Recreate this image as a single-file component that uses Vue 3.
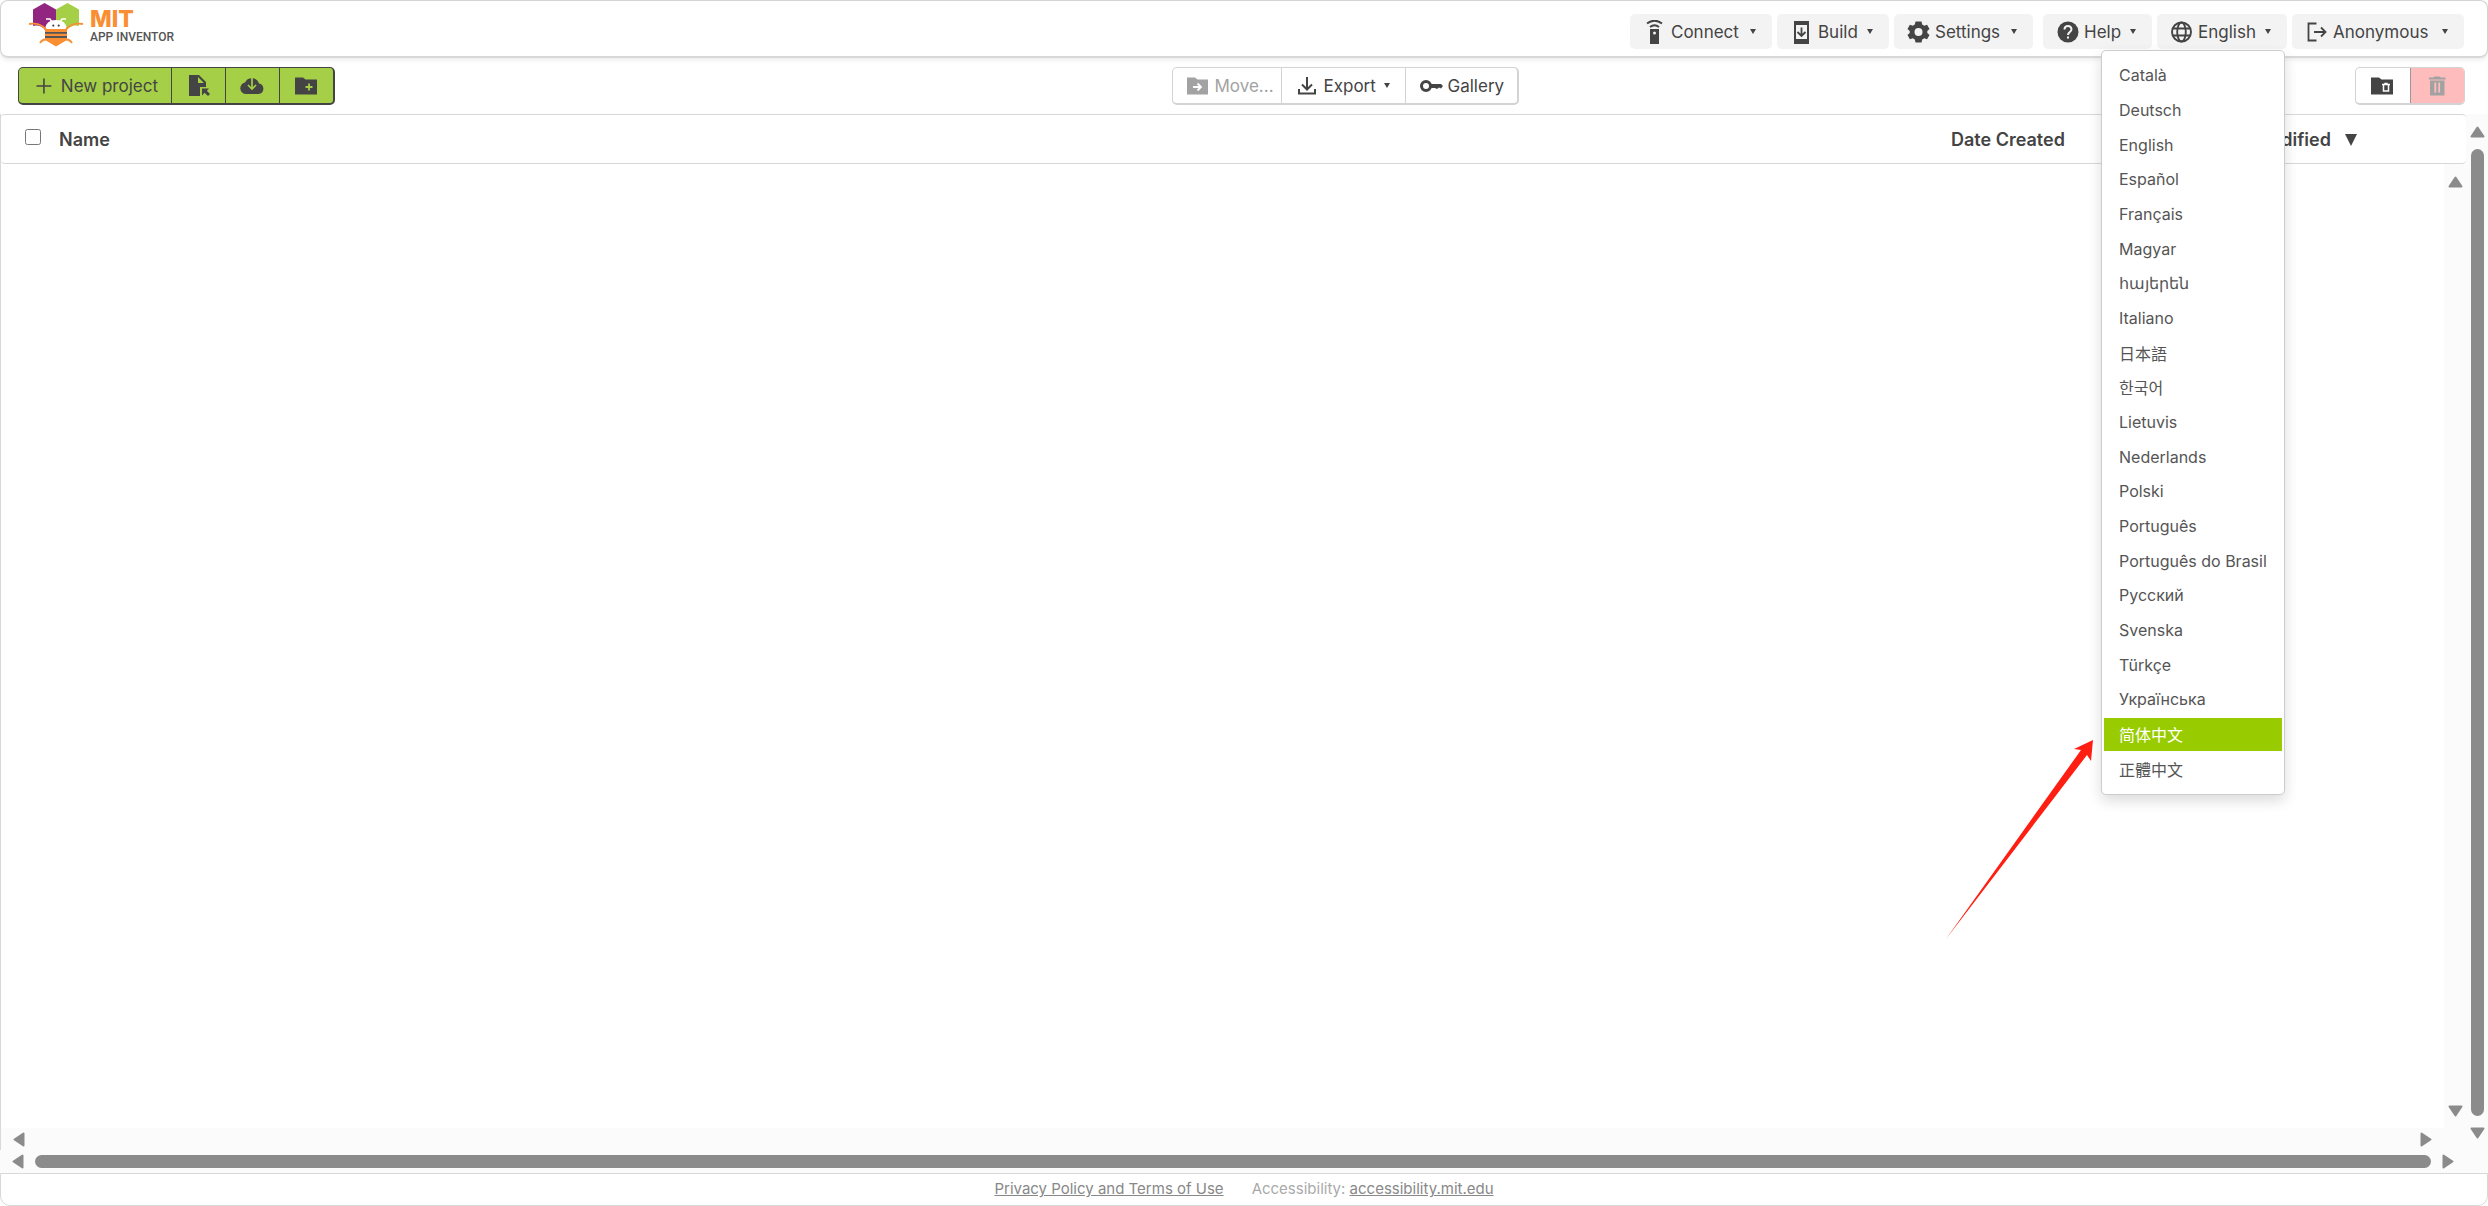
<script setup>
import { ref } from 'vue'

const languages = [
	'Català',
	'Deutsch',
	'English',
	'Español',
	'Français',
	'Magyar',
	'հայերեն',
	'Italiano',
	'日本語',
	'한국어',
	'Lietuvis',
	'Nederlands',
	'Polski',
	'Português',
	'Português do Brasil',
	'Русский',
	'Svenska',
	'Türkçe',
	'Українська',
	'简体中文',
	'正體中文',
]

const highlighted = ref('简体中文')
const selectAll = ref(false)
</script>

<template>
	<div class="page">
		<header class="topbar">
			<a class="logo" href="#" aria-label="MIT App Inventor">
				<svg class="bee" viewBox="0 0 56 46" width="56" height="46">
					<path fill="#91257f" d="M4 7.5 15.5 1 27 7.5V28H4z" />
					<path fill="#a5cf47" d="M27 7.5 38.5 1 50 7.5V28H27z" />
					<path fill="#fff" d="M3 24Q12 22 16 28L17 38H37L38 28Q42 22 51 24V32H3z" />
					<path fill="#fff" d="M16 27Q17 18 27 18T38 27z" />
					<path fill="none" stroke="#fff" stroke-width="1.4" d="M17 17H21L23 20M37 17H33L31 20" />
					<circle cx="24.3" cy="23.6" r="1.1" fill="#444" />
					<circle cx="29.7" cy="23.6" r="1.1" fill="#444" />
					<path fill="none" stroke="#f98e32" stroke-width="1.8" d="M0 22Q10 20 17 27M54 22Q44 20 37 27M11 41Q13 37 20 37M43 41Q41 37 34 37" />
					<path fill="#f98e32" d="M16 27H38V38L27 44.5 16 38z" />
					<path fill="#555" d="M16 30H38V31.8H16zM16 34H38V36H16z" />
				</svg>
				<span class="logo-text">
					<span class="logo-mit">MIT</span>
					<span class="logo-name">APP INVENTOR</span>
				</span>
			</a>
			<nav class="menus">
				<button class="menu-btn connect">
					<svg class="icon" viewBox="0 0 24 24">
						<path fill="none" stroke="currentColor" stroke-width="2" d="M5 3.5Q12.5-2 20 3.5M8 7Q12.5 3.5 17 7" />
						<path fill="currentColor" fill-rule="evenodd" d="M8 9H17V24H8zM12.5 11.5A1.5 1.5 0 1 0 12.5 14.5 1.5 1.5 0 1 0 12.5 11.5z" />
					</svg>
					Connect<i class="caret"></i>
				</button>
				<button class="menu-btn build">
					<svg class="icon" viewBox="0 0 24 24">
						<path fill="currentColor" fill-rule="evenodd" d="M5 1H20V24H5zM7 5V19H18V5z" />
						<path fill="none" stroke="currentColor" stroke-width="1.8" d="M12.5 7.5V16M8.5 12 12.5 16 16.5 12" />
					</svg>
					Build<i class="caret"></i>
				</button>
				<button class="menu-btn settings">
					<svg class="icon" viewBox="0 0 24 24">
						<path fill="currentColor" fill-rule="evenodd" d="M9.5 1.5H15.5L16.2 4.5 18.2 5.7 21.1 4.8 23.5 9 21.3 11V13L23.5 15 21.1 19.2 18.2 18.3 16.2 19.5 15.5 22.5H9.5L8.8 19.5 6.8 18.3 3.9 19.2 1.5 15 3.7 13V11L1.5 9 3.9 4.8 6.8 5.7 8.8 4.5zM12.5 8A4 4 0 1 0 12.5 16 4 4 0 1 0 12.5 8z" />
					</svg>
					Settings<i class="caret"></i>
				</button>
				<button class="menu-btn help">
					<svg class="icon" viewBox="0 0 24 24">
						<circle cx="13" cy="12" r="10.5" fill="currentColor" />
						<path fill="none" stroke="#f3f3f3" stroke-width="2" d="M9.5 9.5C9.5 5 16.5 5 16.5 9.3 16.5 12 13 12 13 15" />
						<path fill="#f3f3f3" d="M12 16.5H14V18.5H12z" />
					</svg>
					Help<i class="caret"></i>
				</button>
				<div class="language">
					<button class="menu-btn lang" aria-expanded="true">
						<svg class="icon" viewBox="0 0 24 24">
							<g fill="none" stroke="currentColor" stroke-width="1.9">
								<circle cx="12.5" cy="12" r="9.5" />
								<ellipse cx="12.5" cy="12" rx="4.3" ry="9.5" />
								<path d="M4 8.5H21M4 15.5H21" />
							</g>
						</svg>
						English<i class="caret"></i>
					</button>
					<ul class="dropdown">
						<li v-for="name in languages" :key="name">
							<button class="lang-item" :class="{ active: name === highlighted }">{{ name }}</button>
							<svg v-if="name === highlighted" class="pointer" viewBox="0 0 147 199">
								<path fill="#ff1f12" d="M147 0 128 9 135 10 0 199 141 15 145 21z" />
							</svg>
						</li>
					</ul>
				</div>
				<button class="menu-btn account">
					<svg class="icon" viewBox="0 0 24 24">
						<path fill="none" stroke="currentColor" stroke-width="1.8" d="M12.5 3.5H4.5V20.5H12.5M10 12H21M17 7.5 21.5 12 17 16.5" />
					</svg>
					Anonymous<i class="caret"></i>
				</button>
			</nav>
		</header>

		<div class="toolbar">
			<div class="group green">
				<button class="tool new">
					<svg viewBox="0 0 16 16" width="16" height="16">
						<path fill="none" stroke="currentColor" stroke-width="1.6" d="M8 .5V15.5M.5 8H15.5" />
					</svg>
					New project
				</button>
				<button class="tool square" aria-label="Import project">
					<svg class="icon" viewBox="0 0 24 24">
						<path fill="currentColor" fill-rule="evenodd" d="M3 1H13L20 8V13H14V22H3zM12 3V9H18z" />
						<path fill="currentColor" d="M16 14.5H23L20.8 16.7 24 20 22 22 18.5 18.7 16 21.5z" />
					</svg>
				</button>
				<button class="tool square" aria-label="Import from cloud">
					<svg class="icon" viewBox="0 0 24 24">
						<path fill="currentColor" d="M6 20A5.8 5.8 0 0 1 5 8.5 7.5 7.5 0 0 1 19 9.5 5.3 5.3 0 0 1 18.5 20z" />
						<path fill="none" stroke="#a5cf47" stroke-width="1.7" d="M12 2V15M8 11 12 15 16 11" />
					</svg>
				</button>
				<button class="tool square" aria-label="New folder">
					<svg class="icon" viewBox="0 0 24 24">
						<path fill="currentColor" d="M1 3.5H9L11.5 5.5H23V20.5H1z" />
						<path fill="none" stroke="#a5cf47" stroke-width="1.8" d="M15 9.5V16.5M11.5 13H18.5" />
					</svg>
				</button>
			</div>
			<div class="group white">
				<button class="tool move" disabled>
					<svg class="icon" viewBox="0 0 24 24">
						<path fill="currentColor" d="M1 3.5H9L11.5 5.5H22V20.5H1z" />
						<path fill="none" stroke="#fff" stroke-width="1.8" d="M7 13H15M11.5 9.5 15 13 11.5 16.5" />
					</svg>
					Move...
				</button>
				<button class="tool export">
					<svg class="icon" viewBox="0 0 24 24">
						<path fill="none" stroke="currentColor" stroke-width="2" d="M12 3V15.5M7 10.5 12 15.5 17 10.5M4 15V19.5H20V15" />
					</svg>
					Export<i class="caret"></i>
				</button>
				<button class="tool gallery">
					<svg class="icon" viewBox="0 0 24 24">
						<circle cx="7" cy="12" r="4.5" fill="none" stroke="currentColor" stroke-width="3" />
						<path fill="currentColor" d="M11 10H22L24 12 22 14.5 20 13.5 18 15 16 14H11z" />
					</svg>
					Gallery
				</button>
			</div>
			<div class="group trash">
				<button class="tool square" aria-label="View trash">
					<svg class="icon" viewBox="0 0 24 24">
						<path fill="currentColor" d="M1 3.5H9L11.5 5.5H23V20.5H1z" />
						<path fill="none" stroke="#fff" stroke-width="1.5" d="M12 10.5H20M14.3 9.5H17.7M13.5 11V17H18.5V11" />
					</svg>
				</button>
				<button class="tool square danger" disabled aria-label="Delete">
					<svg class="icon" viewBox="0 0 24 24">
						<path fill="currentColor" d="M4 3.5H8.5L9.5 2.5H14.5L15.5 3.5H20.5V5.5H4zM5 6.5H19.5V21.5H5z" />
						<path fill="none" stroke="#ffbcbc" stroke-width="1.8" d="M10.3 8.5V18.5M14.2 8.5V18.5" />
					</svg>
				</button>
			</div>
		</div>

		<main class="workspace">
			<section class="projects">
				<table class="list">
					<thead>
						<tr>
							<th class="col-check"><input v-model="selectAll" type="checkbox" aria-label="Select all projects"></th>
							<th class="col-name">Name</th>
							<th class="col-created">Date Created</th>
							<th class="col-modified">Date Modified <svg class="sort" viewBox="0 0 12 12"><path fill="currentColor" d="M0 0H12L6 12z" /></svg></th>
						</tr>
					</thead>
				</table>
				<div class="list-area">
					<div class="rows"></div>
					<div class="track vertical">
						<svg class="up" viewBox="0 0 15 12"><path d="M7.5 1.5 13.5 10.5H1.5z" /></svg>
						<svg class="down" viewBox="0 0 15 12"><path d="M7.5 10.5 13.5 1.5H1.5z" /></svg>
					</div>
					<div class="track horizontal">
						<svg class="side" viewBox="0 0 12 15"><path d="M1.5 7.5 10.5 1.5V13.5z" /></svg>
						<svg class="side" viewBox="0 0 12 15"><path d="M10.5 7.5 1.5 1.5V13.5z" /></svg>
					</div>
					<div class="corner"></div>
				</div>
			</section>
			<div class="track vertical">
				<svg class="up" viewBox="0 0 15 12"><path d="M7.5 1.5 13.5 10.5H1.5z" /></svg>
				<div class="thumb"></div>
				<svg class="down" viewBox="0 0 15 12"><path d="M7.5 10.5 13.5 1.5H1.5z" /></svg>
			</div>
			<div class="track horizontal">
				<svg class="side" viewBox="0 0 12 15"><path d="M1.5 7.5 10.5 1.5V13.5z" /></svg>
				<div class="thumb"></div>
				<svg class="side" viewBox="0 0 12 15"><path d="M10.5 7.5 1.5 1.5V13.5z" /></svg>
			</div>
			<div class="corner"></div>
		</main>

		<footer class="footer">
			<a href="#">Privacy Policy and Terms of Use</a>
			<span>Accessibility: <a href="#">accessibility.mit.edu</a></span>
		</footer>
	</div>
</template>

<style>
body {
	background: #fff;
}
</style>

<style scoped>
.page {
	display: flex;
	flex-direction: column;
	min-height: 100vh;
	box-sizing: border-box;
	font-family: Inter, "Noto Sans", "Noto Sans CJK SC", sans-serif;
	font-size: 16px;
	color: #444;
}

.page *,
.page *::before {
	box-sizing: border-box;
}

button {
	font: inherit;
	color: inherit;
	margin: 0;
	padding: 0;
	border: 0;
	background: none;
	white-space: nowrap;
}

.icon {
	width: 24px;
	height: 24px;
	flex: none;
}

.caret {
	border: 3px solid transparent;
	border-top: 5px solid currentColor;
	border-bottom: 0;
	margin-left: auto;
}

/* top bar */
.topbar {
	display: flex;
	justify-content: space-between;
	height: 58px;
	padding: 0 23px 0 28px;
	border: 1px solid #d3d3d3;
	border-bottom: 2px solid #d8d8d8;
	border-radius: 8px;
	box-shadow: 0 2px 4px rgba(0, 0, 0, 0.08);
}

.logo {
	display: flex;
	gap: 5px;
	color: #555;
	text-decoration: none;
}

.bee {
	margin-top: 1px;
}

.logo-text {
	display: flex;
	flex-direction: column;
	padding-top: 7px;
}

.logo-mit {
	font-size: 23px;
	line-height: 22px;
	font-weight: 800;
	color: #f98e32;
}

.logo-name {
	font-family: Roboto, sans-serif;
	font-size: 12px;
	line-height: 14px;
	font-weight: 500;
}

.menus {
	display: flex;
	gap: 5px;
	padding-top: 13px;
}

.menu-btn {
	display: flex;
	align-items: center;
	gap: 5px;
	height: 35px;
	padding: 0 16px 0 12px;
	border-radius: 5px;
	background: #f3f3f3;
	font-size: 17px;
}

.connect {
	width: 142px;
}

.build {
	width: 112px;
}

.settings {
	width: 139px;
}

.help {
	width: 109px;
	margin-left: 5px;
}

.lang {
	width: 130px;
}

.account {
	width: 172px;
}

.language {
	position: relative;
}

.dropdown {
	position: absolute;
	z-index: 5;
	top: 36px;
	right: 2px;
	width: 184px;
	margin: 0;
	padding: 8px 2px;
	list-style: none;
	display: flex;
	flex-direction: column;
	gap: 1px;
	border: 1px solid #ccc;
	border-radius: 5px;
	background: #fff;
	box-shadow: 0 6px 14px rgba(0, 0, 0, 0.14);
}

.dropdown li {
	position: relative;
	height: 34px;
}

.dropdown li:nth-child(3n) {
	height: 33px;
}

.lang-item {
	display: block;
	width: 100%;
	height: 33px;
	padding: 0 15px 2px;
	text-align: left;
	color: #555;
}

.lang-item.active {
	background: #9c0;
	color: #fff;
}

.pointer {
	position: absolute;
	top: 22px;
	right: calc(100% + 11px);
	width: 147px;
	height: 199px;
	pointer-events: none;
}

/* toolbar */
.toolbar {
	display: flex;
	justify-content: space-between;
	padding: 9px 23px 9px 18px;
}

.group {
	display: flex;
	height: 38px;
	border: 1px solid #d3d3d3;
	border-bottom-width: 2px;
	border-radius: 5px;
	overflow: hidden;
}

.tool {
	display: flex;
	align-items: center;
	gap: 5px;
	padding: 0 13px;
	font-size: 17px;
	border-left: 1px solid #d3d3d3;
}

.tool:first-child {
	border-left: 0;
}

.square {
	width: 54px;
	padding: 0 14px;
}

.green {
	border: 1px solid #444;
	border-right-width: 2px;
	border-bottom-width: 2px;
	background: #a5cf47;
}

.green .tool {
	border-color: #444;
}

.new {
	width: 152px;
	gap: 9px;
	padding-left: 17px;
}

.white {
	border-right-width: 2px;
}

.move {
	width: 108px;
	color: #a2a2a2;
}

.export {
	width: 124px;
	padding-right: 15px;
}

.gallery {
	width: 112px;
}

.danger {
	background: #ffbcbc;
	color: #a2a2a2;
	border-color: #999;
}

/* project list */
.workspace {
	flex: 1;
	display: grid;
	grid-template-columns: 1fr 22px;
	grid-template-rows: 1fr 23px;
}

.projects {
	display: flex;
	flex-direction: column;
	border-left: 1px solid #d8d8d8;
}

.list {
	width: 100%;
	table-layout: fixed;
	border-collapse: separate;
	border-spacing: 0;
	border-top: 1px solid #d8d8d8;
	border-bottom: 1px solid #d8d8d8;
	border-radius: 4px;
}

.list th {
	height: 48px;
	padding: 0;
	text-align: left;
	font-size: 18px;
	font-weight: 600;
}

.col-check {
	width: 58px;
}

.col-check input {
	display: block;
	width: 16px;
	height: 16px;
	margin: 0 0 4px 24px;
}

.col-created {
	width: 258px;
}

.col-modified {
	width: 257px;
}

.sort {
	width: 12px;
	height: 12px;
	margin-left: 10px;
}

.list-area {
	flex: 1;
	display: grid;
	grid-template-columns: 1fr 22px;
	grid-template-rows: 1fr 22px;
}

.track,
.corner {
	background: #fbfbfb;
}

.track {
	display: flex;
	align-items: center;
	justify-content: space-between;
	gap: 11px;
}

.track path {
	fill: #8b8b8b;
	stroke: #8b8b8b;
	stroke-width: 2px;
	stroke-linejoin: round;
}

.horizontal {
	padding: 0 12px;
}

.vertical {
	flex-direction: column;
	padding: 12px 0 11px;
}

.up,
.down {
	width: 15px;
	height: 12px;
}

.side {
	width: 12px;
	height: 15px;
}

.thumb {
	flex: 1;
	border-radius: 7px;
	background: #8b8b8b;
}

.vertical .thumb {
	width: 13px;
}

.horizontal .thumb {
	height: 13px;
}

.footer {
	display: flex;
	justify-content: center;
	gap: 28px;
	height: 33px;
	border: 1px solid #d8d8d8;
	border-radius: 0 0 10px 10px;
	font-size: 15px;
	line-height: 30px;
	color: #aaa;
}

.footer a {
	color: #888;
}
</style>
